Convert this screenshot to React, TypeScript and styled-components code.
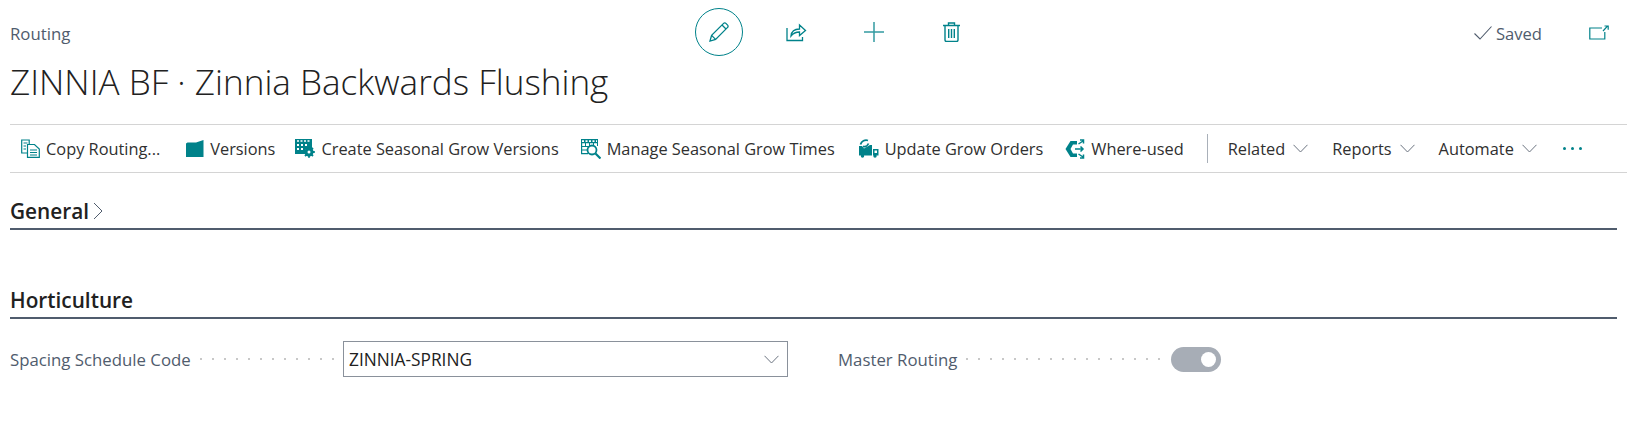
import React from 'react';
import styled, { createGlobalStyle } from 'styled-components';

const TEAL = '#00828a';
const SLATE = '#505c6d';

const GlobalStyle = createGlobalStyle`
  html, body {
    margin: 0;
    padding: 0;
    background: #fff;
    font-family: "Open Sans", "Noto Sans", "Liberation Sans", sans-serif;
  }
`;

const Page = styled.div`
  width: 1627px;
  height: 426px;
  overflow: hidden;
  background: #fff;
`;

const TopRow = styled.div`
  display: flex;
  align-items: center;
  height: 64px;
  padding: 0 16px 0 10px;
`;

const Caption = styled.div`
  width: 685px;
  font-size: 16.8px;
  color: ${SLATE};
  position: relative;
  top: 1px;
`;

const EditCircle = styled.button`
  width: 48px;
  height: 48px;
  border: 1px solid ${TEAL};
  border-radius: 50%;
  background: #fff;
  padding: 0;
  display: flex;
  align-items: center;
  justify-content: center;
`;

const IconButton = styled.button<{ $gap: number }>`
  width: 24px;
  height: 24px;
  margin-left: ${(p) => p.$gap}px;
  border: none;
  background: none;
  padding: 0;
  display: flex;
  align-items: center;
  justify-content: center;
`;

const SavedState = styled.div`
  margin-left: auto;
  display: flex;
  align-items: center;
  gap: 4px;
  font-size: 16.6px;
  color: ${SLATE};
  position: relative;
  top: 1px;
`;

const ExpandButton = styled(IconButton)``;

const Title = styled.h1`
  margin: 0;
  padding-left: 10px;
  height: 60px;
  font-size: 35.1px;
  line-height: 34px;
  font-weight: 300;
  color: #212121;
  white-space: nowrap;
`;

const Toolbar = styled.div`
  display: flex;
  align-items: center;
  height: 47px;
  margin-left: 10px;
  padding-left: 11px;
  border-top: 1px solid #d4d4d4;
  border-bottom: 1px solid #d4d4d4;
`;

const Action = styled.div<{ $gap?: number }>`
  display: flex;
  align-items: center;
  gap: 6px;
  margin-right: ${(p) => p.$gap ?? 23}px;
  font-size: 16.35px;
  color: #303030;
  white-space: nowrap;
`;

const Divider = styled.div`
  width: 1px;
  height: 29px;
  background: #a9b0b9;
  margin-right: 20px;
`;

const Menu = styled.div`
  display: flex;
  align-items: center;
  gap: 8px;
  margin-right: 24px;
  font-size: 16.35px;
  color: #303030;
`;

const MoreDots = styled.div`
  display: flex;
  gap: 5px;
  margin-left: 2px;
  span {
    width: 3px;
    height: 3px;
    border-radius: 50%;
    background: ${TEAL};
  }
`;

const Section = styled.section<{ $height: number }>`
  height: ${(p) => p.$height}px;
  margin: 0 10px;
  display: flex;
  flex-direction: column;
`;

const SectionHeader = styled.div<{ $top: number }>`
  display: flex;
  align-items: center;
  gap: 4px;
  margin-top: ${(p) => p.$top}px;
  padding-bottom: 3px;
  border-bottom: 2px solid ${SLATE};
  font-size: 20.8px;
  line-height: 28px;
  font-weight: 600;
  color: #212121;
`;

const FieldRow = styled.div`
  display: flex;
  align-items: center;
  margin-top: 22px;
`;

const Field = styled.div<{ $width: number; $gap: number }>`
  display: flex;
  align-items: center;
  width: ${(p) => p.$width}px;
  margin-right: ${(p) => p.$gap}px;
`;

const Label = styled.label`
  font-size: 16.8px;
  color: ${SLATE};
  white-space: nowrap;
`;

const Leader = styled.div`
  flex: 1;
  height: 2px;
  margin: 0 8px 0 9px;
  background-image: radial-gradient(circle at 1px 1px, #c8c8c8 1px, transparent 1.2px);
  background-size: 12px 2px;
  background-repeat: repeat-x;
`;

const SelectBox = styled.div`
  box-sizing: border-box;
  width: 445px;
  height: 36px;
  border: 1px solid #8a919b;
  display: flex;
  align-items: center;
  justify-content: space-between;
  padding: 0 8px 0 5px;
  font-size: 17.3px;
  color: #212121;
`;

const Toggle = styled.div`
  position: relative;
  width: 50px;
  height: 25px;
  border-radius: 13px;
  background: #a7adb6;
  &::after {
    content: '';
    position: absolute;
    right: 5px;
    top: 5px;
    width: 15px;
    height: 15px;
    border-radius: 50%;
    background: #fff;
  }
`;

const Chevron = ({ size = 15, color = '#6b7480' }: { size?: number; color?: string }) => (
  <svg width={size} height={size * 0.6} viewBox="0 0 15 9" fill="none">
    <path d="M.5.8 7.500 8l7-7.200" stroke={color} strokeWidth="1" />
  </svg>
);

const RightChevron = () => (
  <svg width="10" height="18" viewBox="0 0 10 18" fill="none">
    <path d="m1 1 8 8-8 8" stroke={SLATE} />
  </svg>
);

const PencilIcon = () => (
  <svg width="22" height="22" viewBox="0 0 22 22" fill="none" stroke={TEAL} strokeWidth="1.3">
    <path d="M2 20l1.600-5.600L15.600 2.400a1.600 1.600 0 0 1 2.300 0l1.700 1.700a1.600 1.600 0 0 1 0 2.300L7.600 18.400 2 20z" />
    <path d="M3.600 14.400l4 4M14 4l4 4" />
  </svg>
);

const ShareIcon = () => (
  <svg width="21" height="20" viewBox="0 0 21 20" fill="none" stroke={TEAL} strokeWidth="1.3">
    <path d="M1 6v12.500h15.500V15" />
    <path d="M5 14c.4-4 3-7 8.500-7V3l6 5.500-6 5V10C9.500 10 7 11.500 5 14z" />
  </svg>
);

const PlusIcon = () => (
  <svg width="20" height="20" viewBox="0 0 20 20" stroke={TEAL} strokeWidth="1.5" opacity=".8">
    <path d="M0 10h20M10 0v20" />
  </svg>
);

const TrashIcon = () => (
  <svg width="17" height="20" viewBox="0 0 17 20" fill="none" stroke={TEAL} strokeWidth="1.4">
    <path d="M0 3.500h17M2 3.500V18a1.500 1.500 0 0 0 1.500 1.500h10A1.500 1.500 0 0 0 15 18V3.500M5.500 3.500V1h6v2.500" />
    <path d="M5.700 7v9M8.500 7v9M11.300 7v9" />
  </svg>
);

const CheckIcon = () => (
  <svg width="18" height="14" viewBox="0 0 18 14" fill="none" stroke={SLATE} strokeWidth="1.1">
    <path d="M.5 7.500 6 13 17.500.5" />
  </svg>
);

const OpenIcon = () => (
  <svg width="20" height="15" viewBox="0 0 20 15" fill="none" stroke={TEAL} strokeWidth="1.2">
    <path d="M13 3H.8v11h15V7" />
    <path d="M14 6 18.500 1.200M15.500 1h3.700v3.700" />
  </svg>
);

const CopyIcon = () => (
  <svg width="19" height="19" viewBox="0 0 19 19" fill="none" stroke={TEAL} strokeWidth="1.2">
    <path d="M6 14H.7V1h7.500v4" />
    <path d="M2.500 4h4M2.500 7h2.500M2.500 10h2.500" />
    <path d="M6.500 5.500h7l4.800 4.500v8.300H6.500z" />
    <path d="M9 11h7M9 13.500h7M9 16h7" />
  </svg>
);

const FolderIcon = () => (
  <svg width="18" height="17" viewBox="0 0 18 17">
    <path d="M0 3.500 1.500 2.500H10L17.500 0v17H0z" fill={TEAL} />
  </svg>
);

const GridCells = () => (
  <g fill={TEAL}>
    <path d="M0 0h17v1.200H0zM0 1h1v2H0zM3 1h1.500v2H3zM6.500 1H8v2H6.500zM10 1h1.500v2H10zM13.500 1H15v2h-1.500zM16 1h1v6h-1z" />
    <path d="M0 3h17v1.200H0zM0 3h1.200v12H0z" />
    <path d="M0 7h9v1H0zM0 10.500h7v1H0zM0 14h7v1.200H0zM4 4h1v4H4zM8 4h1v3H8zM12 4h1v2h-1z" />
  </g>
);

const GrowGearIcon = () => (
  <svg width="20" height="19" viewBox="0 0 20 19">
    <path d="M0 0h17v10H10v5H0z" fill={TEAL} />
    <path d="M2 1.200h2v1.600H2zM5.500 1.200h2v1.600h-2zM9 1.200h2v1.600H9zM12.500 1.200h2v1.600h-2zM2 5h2v2H2zM6 5h2v2H6zM10 5h2v2h-2zM2 9h2v2H2zM6 9h2v2H6z" fill="#fff" />
    <circle cx="14" cy="13" r="4.500" fill={TEAL} />
    <path d="M14 7.200v11.600M8.200 13h11.600M10 9l8 8M18 9l-8 8" stroke={TEAL} strokeWidth="1.800" />
    <circle cx="14" cy="13" r="1.500" fill="#fff" />
  </svg>
);

const GrowSearchIcon = () => (
  <svg width="20" height="20" viewBox="0 0 20 20" fill="none">
    <GridCells />
    <circle cx="11" cy="11" r="4.500" fill="#fff" stroke={TEAL} strokeWidth="1.800" />
    <path d="m14.500 14.500 5 5" stroke={TEAL} strokeWidth="2.200" />
  </svg>
);

const TruckIcon = () => (
  <svg width="21" height="19" viewBox="0 0 21 19">
    <path d="M1 7h3l2 2.500 6-3.500h2v10.500H1z" fill={TEAL} />
    <path d="M15 10h5.500v6.500H15z" fill={TEAL} />
    <path d="M16.500 11.500h2.500v2.500h-2.500z" fill="#fff" />
    <circle cx="4.500" cy="17" r="1.700" fill={TEAL} />
    <circle cx="17" cy="17" r="1.700" fill={TEAL} />
    <path d="M2.500 5.500C3.500 2 7 .5 10 1.500M10.500 4.500C9.500 7 7 8 5 7.300" fill="none" stroke={TEAL} strokeWidth="1.800" />
  </svg>
);

const WhereUsedIcon = () => (
  <svg width="20" height="20" viewBox="0 0 20 20" fill="none">
    <path d="M12 2H5.500L.5 10l5 8H12v-3.500H8L5.500 10 8 5.500h4z" fill={TEAL} />
    <path d="M10 10h8M15.500 7.500l2.500 2.500-2.500 2.500" stroke={TEAL} strokeWidth="1.500" />
    <path d="m13.500 5 4.500-3M15 1h3.500v3.500M13.500 15l4.500 3M15 19h3.500v-3.500" stroke={TEAL} strokeWidth="1.500" />
  </svg>
);

const actions = [
  { label: 'Copy Routing...', icon: <CopyIcon />, gap: 26 },
  { label: 'Versions', icon: <FolderIcon />, gap: 20 },
  { label: 'Create Seasonal Grow Versions', icon: <GrowGearIcon />, gap: 22 },
  { label: 'Manage Seasonal Grow Times', icon: <GrowSearchIcon />, gap: 23 },
  { label: 'Update Grow Orders', icon: <TruckIcon />, gap: 22 },
  { label: 'Where-used', icon: <WhereUsedIcon />, gap: 23 },
];

const App: React.FC = () => (
  <Page>
    <GlobalStyle />
    <TopRow>
      <Caption>Routing</Caption>
      <EditCircle><PencilIcon /></EditCircle>
      <IconButton $gap={41}><ShareIcon /></IconButton>
      <IconButton $gap={54}><PlusIcon /></IconButton>
      <IconButton $gap={53}><TrashIcon /></IconButton>
      <SavedState><CheckIcon />Saved</SavedState>
      <ExpandButton $gap={45}><OpenIcon /></ExpandButton>
    </TopRow>
    <Title>ZINNIA BF · Zinnia Backwards Flushing</Title>
    <Toolbar>
      {actions.map((a) => (
        <Action key={a.label} $gap={a.gap}>{a.icon}{a.label}</Action>
      ))}
      <Divider />
      <Menu>Related<Chevron /></Menu>
      <Menu>Reports<Chevron /></Menu>
      <Menu>Automate<Chevron /></Menu>
      <MoreDots><span /><span /><span /></MoreDots>
    </Toolbar>
    <Section $height={57}>
      <SectionHeader $top={24}>General<RightChevron /></SectionHeader>
    </Section>
    <Section $height={150}>
      <SectionHeader $top={56}>Horticulture</SectionHeader>
      <FieldRow>
        <Field $width={778} $gap={50}>
          <Label>Spacing Schedule Code</Label>
          <Leader />
          <SelectBox>ZINNIA-SPRING<Chevron /></SelectBox>
        </Field>
        <Field $width={383} $gap={0}>
          <Label>Master Routing</Label>
          <Leader />
          <Toggle />
        </Field>
      </FieldRow>
    </Section>
  </Page>
);

export default App;
